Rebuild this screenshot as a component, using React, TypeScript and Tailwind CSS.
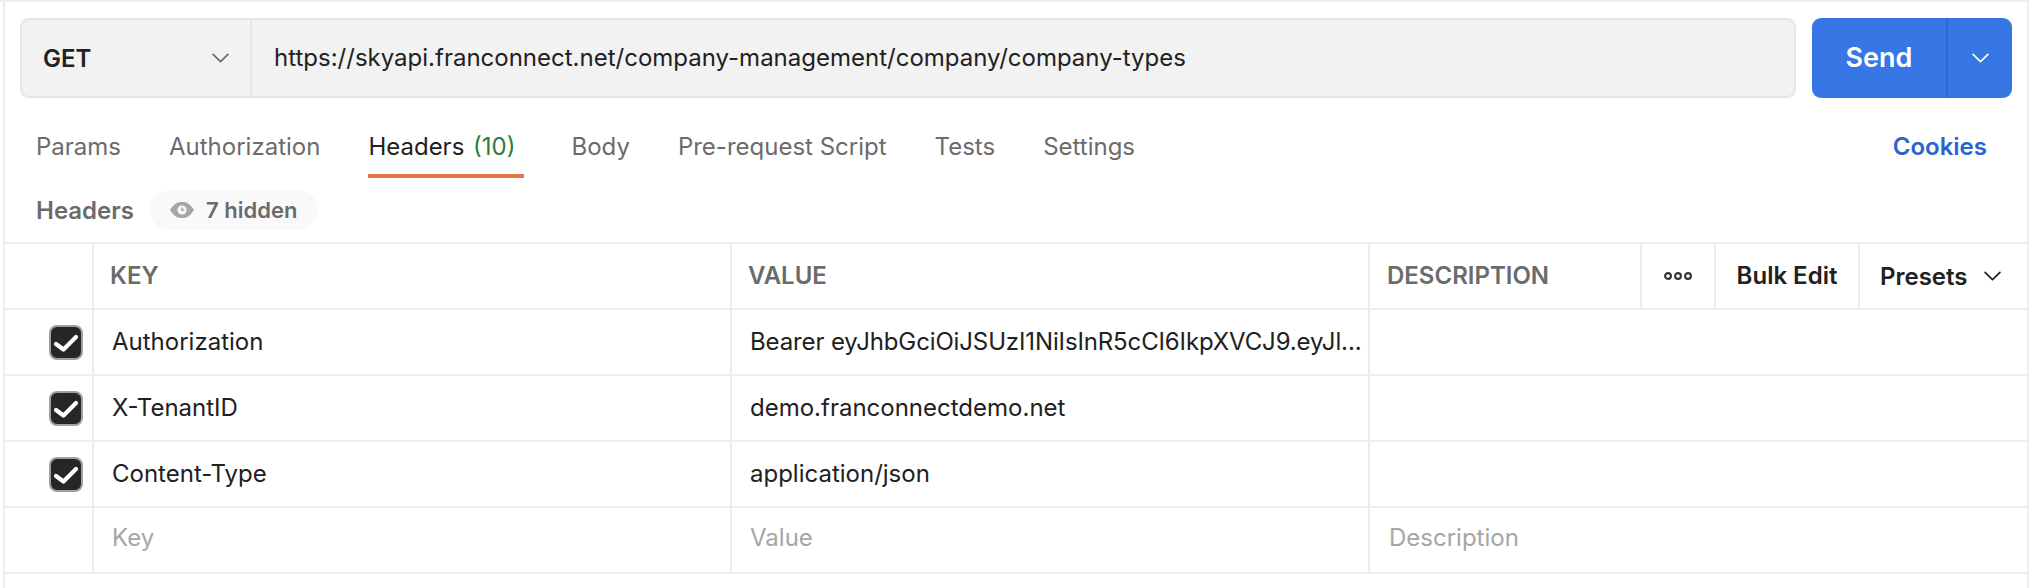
import React from "react";

const Chevron = ({ className }: { className: string }) => (
  <svg viewBox="0 0 16 9" fill="none" stroke="currentColor" strokeWidth="1.6" strokeLinecap="round" strokeLinejoin="round" className={className}>
    <path d="M1 1 L8 8 L15 1" />
  </svg>
);

const Check = () => (
  <div className="w-[34px] h-[35px] rounded-[8px] bg-[#262626] border-2 border-[#a0a0a0] flex items-center justify-center">
    <svg viewBox="0 0 30 31" fill="none" stroke="#ffffff" strokeWidth="4.2" strokeLinecap="round" strokeLinejoin="round" className="w-[30px] h-[31px]">
      <path d="M5 17 L12.5 22.5 L25 10" />
    </svg>
  </div>
);

const Eye = () => (
  <svg viewBox="0 0 24 16" className="w-[24px] h-[16px]" fill="none">
    <path d="M1.5 8 C5 2.5 8.5 1 12 1 C15.5 1 19 2.5 22.5 8 C19 13.5 15.5 15 12 15 C8.5 15 5 13.5 1.5 8 Z" stroke="#a6a6a6" strokeWidth="2.4" fill="#a6a6a6" />
    <circle cx="12" cy="8" r="4.6" fill="#f9f9f9" />
    <path d="M12 5.6 V8 H14.4" stroke="#a6a6a6" strokeWidth="1.6" />
  </svg>
);

const Tab = ({ label }: { label: string }) => (
  <div className="h-[52px] leading-[41px] text-[#6b6b6b]">{label}</div>
);

const BodyRow = ({ check, k, v, d, muted }: { check?: boolean; k: string; v: React.ReactNode; d?: string; muted?: boolean }) => (
  <div className={`flex h-[66px] border-t-2 border-[#ededed] ${muted ? "text-[#a6a6a6] leading-[60px]" : "text-[#212121] leading-[63px]"}`}>
    <div className="w-[89px] shrink-0 border-r-2 border-[#ededed] flex items-center pl-[44px]">{check && <Check />}</div>
    <div className="w-[638px] shrink-0 border-r-2 border-[#ededed] pl-[18px] whitespace-nowrap">{k}</div>
    <div className="w-[638px] shrink-0 border-r-2 border-[#ededed] pl-[18px] whitespace-nowrap">{v}</div>
    <div className="flex-1 pl-[19px]">{d}</div>
  </div>
);

export default function App() {
  return (
    <div className="w-[2029px] h-[588px] border-t-2 border-[#ededed] bg-white overflow-hidden text-[24px] font-['Inter',sans-serif]">
      <div className="ml-[3px] h-full border-x-2 border-[#ededed]">
        <div className="flex gap-[16px] pt-[16px] pl-[15px] pr-[15px]">
          <div className="flex-1 h-[80px] flex bg-[#f2f2f2] border-2 border-[#e6e6e6] rounded-[9px]">
            <div className="w-[230px] shrink-0 border-r-2 border-[#e6e6e6] flex items-center justify-between pl-[21px] pr-[21px]">
              <span className="font-semibold text-[#212121] pt-[2px]">GET</span>
              <Chevron className="w-[17px] h-[10px] text-[#6b6b6b]" />
            </div>
            <div className="flex-1 flex items-center pl-[22px] pb-[1px] text-[#212121]">
              https://skyapi.franconnect.net/company-management/company/company-types
            </div>
          </div>
          <div className="w-[200px] h-[80px] flex bg-[#3777e5] rounded-[9px] text-white">
            <div className="w-[136px] border-r-2 border-[#2f68ca] flex items-center justify-center text-[27px] font-semibold">Send</div>
            <div className="flex-1 flex items-center justify-center">
              <Chevron className="w-[17px] h-[10px] text-white" />
            </div>
          </div>
        </div>

        <div className="flex items-start justify-between mt-[28px] pl-[31px] pr-[40px]">
          <div className="flex gap-[48px]">
            <Tab label="Params" />
            <Tab label="Authorization" />
            <div className="h-[52px] leading-[41px] border-b-4 border-[#ed7043] pr-[8px] text-[#212121]">
              Headers <span className="text-[#2a7d3c] ml-[2px]">(10)</span>
            </div>
            <Tab label="Body" />
            <Tab label="Pre-request Script" />
            <Tab label="Tests" />
            <Tab label="Settings" />
          </div>
          <div className="leading-[41px] font-semibold text-[#2b63cf]">Cookies</div>
        </div>

        <div className="flex items-center h-[64px] pl-[31px] gap-[16px]">
          <span className="font-semibold text-[#6b6b6b] pt-[2px]">Headers</span>
          <div className="h-[40px] w-[168px] rounded-[20px] bg-[#f9f9f9] flex items-center pl-[20px] gap-[12px] text-[22px] font-semibold text-[#6b6b6b]">
            <Eye />
            <span>7 hidden</span>
          </div>
        </div>

        <div className="border-b-2 border-[#ededed]">
          <div className="flex h-[66px] border-t-2 border-[#ededed] leading-[63px] font-semibold text-[#6b6b6b]">
            <div className="w-[89px] shrink-0 border-r-2 border-[#ededed]" />
            <div className="w-[638px] shrink-0 border-r-2 border-[#ededed] pl-[16px]">KEY</div>
            <div className="w-[638px] shrink-0 border-r-2 border-[#ededed] pl-[16px]">VALUE</div>
            <div className="w-[272px] shrink-0 border-r-2 border-[#ededed] pl-[17px]">DESCRIPTION</div>
            <div className="w-[74px] shrink-0 border-r-2 border-[#ededed] flex items-center justify-center">
              <svg viewBox="0 0 28 8" className="w-[28px] h-[8px]" fill="none" stroke="#333333" strokeWidth="2.1">
                <circle cx="4" cy="4" r="2.9" />
                <circle cx="14" cy="4" r="2.9" />
                <circle cx="24" cy="4" r="2.9" />
              </svg>
            </div>
            <div className="w-[144px] shrink-0 border-r-2 border-[#ededed] text-center text-[#212121]">Bulk Edit</div>
            <div className="flex-1 flex items-center pl-[20px] gap-[16px] text-[#212121]">
              <span>Presets</span>
              <Chevron className="w-[17px] h-[10px] text-[#212121]" />
            </div>
          </div>
          <BodyRow check k="Authorization" v={<span className="tracking-[-0.13px]">Bearer eyJhbGciOiJSUzI1NiIsInR5cCI6IkpXVCJ9.eyJl...</span>} />
          <BodyRow check k="X-TenantID" v="demo.franconnectdemo.net" />
          <BodyRow check k="Content-Type" v="application/json" />
          <BodyRow muted k="Key" v="Value" d="Description" />
        </div>
      </div>
    </div>
  );
}
